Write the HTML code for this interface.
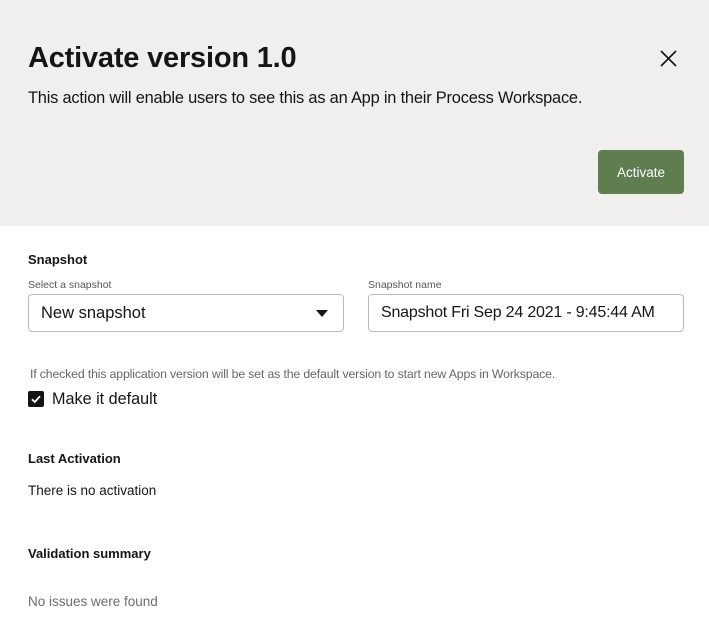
<!DOCTYPE html>
<html><head><style>
*{margin:0;padding:0;box-sizing:border-box}
body{width:709px;height:641px;background:#fff;font-family:"Liberation Sans",sans-serif;color:#161513;position:relative;overflow:hidden}
.hdr{position:absolute;left:0;top:0;width:709px;height:226px;background:#f1efed}
.a{position:absolute;white-space:nowrap;line-height:1}
.btn{position:absolute;left:598px;top:150px;width:86px;height:44px;background:#5f7d4f;border-radius:4px;color:#fff;font-size:13.5px;display:flex;align-items:center;justify-content:center}
.inp{position:absolute;top:294px;height:38px;border:1px solid #bdbbb8;border-radius:4px;background:#fff;font-size:17px;padding-left:12px;display:flex;align-items:center}
</style></head><body>
<div class="hdr"></div>
<div class="a" style="left:28px;top:44px;font-size:29px;font-weight:bold;letter-spacing:-0.2px">Activate version 1.0</div>
<svg class="a" style="left:660px;top:50px" width="17" height="17" viewBox="0 0 17 17"><path d="M1 1L16 16M16 1L1 16" stroke="#161513" stroke-width="1.6"/></svg>
<div class="a" style="left:28px;top:90px;font-size:16.4px;letter-spacing:-0.2px">This action will enable users to see this as an App in their Process Workspace.</div>
<div class="btn">Activate</div>
<div class="a" style="left:28px;top:253px;font-size:13px;font-weight:bold">Snapshot</div>
<div class="a" style="left:28px;top:280px;font-size:10.5px;color:#555">Select a snapshot</div>
<div class="a" style="left:368px;top:280px;font-size:10.5px;color:#555">Snapshot name</div>
<div class="inp" style="left:28px;width:316px;font-size:16.5px">New snapshot<svg style="position:absolute;right:15px;top:15px" width="12" height="7"><path d="M0 0H12L6 7Z" fill="#161513"/></svg></div>
<div class="inp" style="left:368px;width:316px;font-size:16px;letter-spacing:-0.2px">Snapshot Fri Sep 24 2021 - 9:45:44 AM</div>
<div class="a" style="left:30px;top:368px;font-size:12.3px;color:#666;letter-spacing:-0.15px">If checked this application version will be set as the default version to start new Apps in Workspace.</div>
<svg class="a" style="left:28px;top:391px" width="16" height="16"><rect width="16" height="16" rx="2" fill="#161513"/><path d="M4 8.3L6.8 11L12 5.2" stroke="#fff" stroke-width="1.8" fill="none"/></svg>
<div class="a" style="left:52px;top:391px;font-size:16.2px">Make it default</div>
<div class="a" style="left:28px;top:452px;font-size:13px;font-weight:bold">Last Activation</div>
<div class="a" style="left:28px;top:484px;font-size:13.5px">There is no activation</div>
<div class="a" style="left:28px;top:547px;font-size:13px;font-weight:bold">Validation summary</div>
<div class="a" style="left:28px;top:595px;font-size:13.5px;color:#6f6c69">No issues were found</div>
</body></html>
